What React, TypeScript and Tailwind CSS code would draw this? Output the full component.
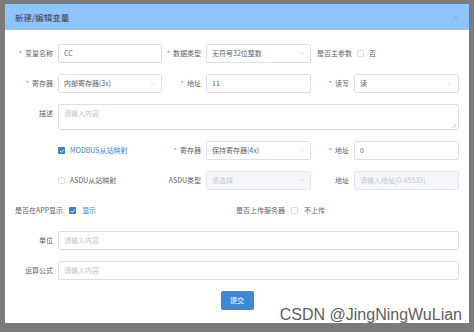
import { ChevronDown, X } from "lucide-react";

const font = "font-['Noto_Sans_CJK_SC','Liberation_Sans',sans-serif]";

function Label({ text, req, w }: { text: string; req?: boolean; w: string }) {
  return (
    <div className={`${w} shrink-0 pr-[5px] text-right text-[7px] leading-none text-[#606266]`}>
      {req && <span className="mr-[3px] text-[#f56c6c]">*</span>}
      {text}
    </div>
  );
}

function Input({
  value,
  placeholder,
  disabled,
  w,
}: {
  value?: string;
  placeholder?: string;
  disabled?: boolean;
  w: string;
}) {
  return (
    <div
      className={`${w} h-[19px] shrink-0 flex items-center rounded-[2px] border px-[5px] text-[7px] ${
        disabled ? "border-[#e4e7ed] bg-[#f5f7fa]" : "border-[#dcdfe6] bg-white"
      }`}
    >
      {value ? (
        <span className="text-[#606266]">{value}</span>
      ) : (
        <span className="text-[#c0c4cc]">{placeholder}</span>
      )}
    </div>
  );
}

function Select(props: { value?: string; placeholder?: string; disabled?: boolean; w: string }) {
  const { value, placeholder, disabled, w } = props;
  return (
    <div
      className={`${w} h-[19px] shrink-0 flex items-center justify-between rounded-[2px] border pl-[5px] pr-[5px] text-[7px] ${
        disabled ? "border-[#e4e7ed] bg-[#f5f7fa]" : "border-[#dcdfe6] bg-white"
      }`}
    >
      {value ? (
        <span className="text-[#606266]">{value}</span>
      ) : (
        <span className="text-[#c0c4cc]">{placeholder}</span>
      )}
      <ChevronDown className="h-[7px] w-[7px] text-[#c0c4cc]" strokeWidth={2} />
    </div>
  );
}

function Check({ checked }: { checked?: boolean }) {
  return checked ? (
    <span className="flex h-[7px] w-[7px] shrink-0 items-center justify-center rounded-[1px] bg-[#3d82cc]">
      <svg viewBox="0 0 8 8" className="h-[6px] w-[6px]">
        <path d="M1.5 4.2 L3.3 5.8 L6.5 2.2" fill="none" stroke="white" strokeWidth="1.2" />
      </svg>
    </span>
  ) : (
    <span className="block h-[7px] w-[7px] shrink-0 rounded-[1px] border border-[#dcdfe6] bg-white" />
  );
}

export default function App() {
  return (
    <div className={`relative h-[332px] w-[474px] overflow-hidden bg-[#7b7b7b] pl-[5px] pt-[4px] ${font}`}>
      <div className="flex h-[319px] w-[464px] flex-col bg-white">
        <div className="flex h-[26px] shrink-0 items-center justify-between bg-[#8ec4fb] pl-[10px] pr-[10px]">
          <span className="text-[8.5px] text-[#3a3d42]">新建/编辑变量</span>
          <X className="h-[7px] w-[7px] text-[#8a9fb8]" strokeWidth={2} />
        </div>

        <div className="flex flex-col gap-[11px] pr-[10px] pt-[14px]">
          <div className="flex items-center">
            <Label w="w-[53px]" req text="变量名称" />
            <Input w="w-[104px]" value="CC" />
            <Label w="w-[44px]" req text="数据类型" />
            <Select w="w-[105px]" value="无符号32位整数" />
            <Label w="w-[46px]" text="是否主参数" />
            <Check />
            <span className="ml-[5px] text-[7px] text-[#606266]">否</span>
          </div>

          <div className="flex items-center">
            <Label w="w-[53px]" req text="寄存器" />
            <Select w="w-[104px]" value="内部寄存器(3x)" />
            <Label w="w-[44px]" req text="地址" />
            <Input w="w-[105px]" value="11" />
            <Label w="w-[43px]" req text="读写" />
            <Select w="w-[105px]" value="读" />
          </div>

          <div className="flex items-start">
            <div className="pt-[6px]">
              <Label w="w-[53px]" text="描述" />
            </div>
            <div className="relative h-[26px] w-[401px] rounded-[2px] border border-[#dcdfe6] px-[5px] pt-[3px] text-[7px] text-[#c0c4cc]">
              请输入内容
              <svg viewBox="0 0 6 6" className="absolute bottom-[1px] right-[1px] h-[5px] w-[5px]">
                <path d="M5.5 1 L1 5.5 M5.5 3.5 L3.5 5.5" stroke="#a0a4aa" strokeWidth="0.8" />
              </svg>
            </div>
          </div>

          <div className="flex items-center">
            <div className="w-[53px] shrink-0" />
            <div className="flex w-[104px] shrink-0 items-center gap-[5px]">
              <Check checked />
              <span className="text-[7px] text-[#3d82cc]">MODBUS从站映射</span>
            </div>
            <Label w="w-[44px]" req text="寄存器" />
            <Select w="w-[105px]" value="保持寄存器(4x)" />
            <Label w="w-[43px]" req text="地址" />
            <Input w="w-[105px]" value="0" />
          </div>

          <div className="flex items-center">
            <div className="w-[53px] shrink-0" />
            <div className="flex w-[104px] shrink-0 items-center gap-[5px]">
              <Check />
              <span className="text-[7px] text-[#606266]">ASDU从站映射</span>
            </div>
            <Label w="w-[44px]" text="ASDU类型" />
            <Select w="w-[105px]" disabled placeholder="请选择" />
            <Label w="w-[43px]" text="地址" />
            <Input w="w-[105px]" disabled placeholder="请输入地址[0-65535]" />
          </div>

          <div className="flex h-[19px] items-center pl-[10px] text-[7px]">
            <div className="flex w-[221px] items-center gap-[6px]">
              <span className="text-[#606266]">是否在APP显示</span>
              <Check checked />
              <span className="text-[#3d82cc]">显示</span>
            </div>
            <div className="flex items-center gap-[6px]">
              <span className="text-[#606266]">是否上传服务器</span>
              <Check />
              <span className="text-[#606266]">不上传</span>
            </div>
          </div>

          <div className="flex items-center">
            <Label w="w-[53px]" text="单位" />
            <Input w="w-[401px]" placeholder="请输入内容" />
          </div>

          <div className="flex items-center">
            <Label w="w-[53px]" text="运算公式" />
            <Input w="w-[401px]" placeholder="请输入内容" />
          </div>

          <div className="flex justify-center pl-[10px]">
            <button className="flex h-[19px] w-[33px] items-center justify-center rounded-[2px] bg-[#3a8ad9] text-[7px] text-white">
              提交
            </button>
          </div>
        </div>
      </div>

      <div className="absolute bottom-[9px] right-[12px] font-['Liberation_Sans',sans-serif] text-[16px] leading-none text-[#606060]">
        CSDN @JingNingWuLian
      </div>
    </div>
  );
}
